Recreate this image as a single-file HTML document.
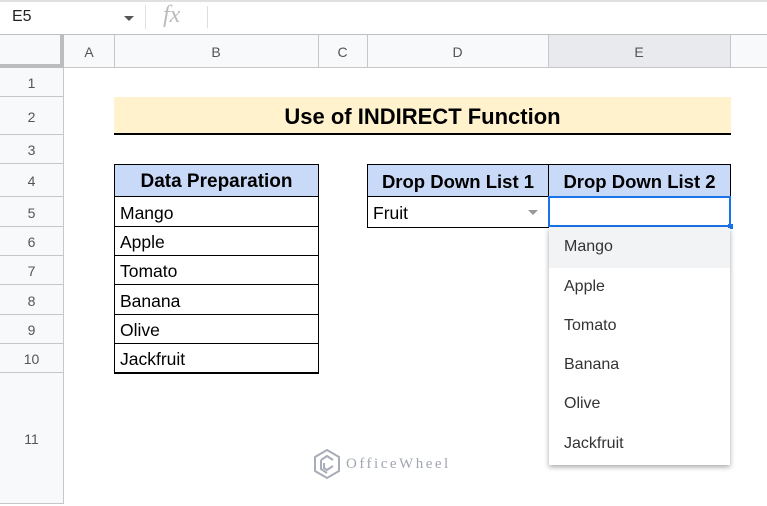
<!DOCTYPE html>
<html><head><style>
body{margin:0;width:767px;height:504px;overflow:hidden;background:#fff;font-family:"Liberation Sans",Arial,sans-serif;position:relative}
.a{position:absolute;box-sizing:border-box}
.hdr{background:#f8f9fa;color:#555;font-size:14px;text-align:center}
.vl{position:absolute;width:1px;background:#e2e3e3}
.cell{position:absolute;box-sizing:border-box;font-size:17.5px;color:#000;padding-left:5px;padding-top:3px;display:flex;align-items:center}
.dd{position:absolute;left:564px;font-size:16px;color:#333}
</style></head><body>
<div class="a" style="left:0;top:0;width:767px;height:2px;background:#e0e0e0"></div>
<div class="a" style="left:12px;top:8px;font-size:16px;color:#222">E5</div>
<div class="a" style="left:124px;top:16px;width:0;height:0;border-left:5px solid transparent;border-right:5px solid transparent;border-top:5px solid #555"></div>
<div class="a" style="left:145px;top:5px;width:1px;height:24px;background:#e0e0e0"></div>
<div class="a" style="left:163px;top:2px;font-size:24px;color:#bbb;font-family:'Liberation Serif',serif;font-style:italic">fx</div>
<div class="a" style="left:207px;top:6px;width:1px;height:22px;background:#ddd"></div>
<div class="a" style="left:0;top:34px;width:767px;height:1px;background:#c0c0c0"></div>
<div class="a hdr" style="left:0;top:35px;width:767px;height:33px"></div>
<div class="a" style="left:0;top:35px;width:64px;height:33px;border-right:4px solid #bdbdbd;border-bottom:4px solid #bdbdbd;background:#f8f9fa"></div>
<div class="a hdr" style="left:64px;top:44px;width:50px">A</div>
<div class="a hdr" style="left:114px;top:44px;width:204px">B</div>
<div class="a hdr" style="left:318px;top:44px;width:49px">C</div>
<div class="a hdr" style="left:367px;top:44px;width:181px">D</div>
<div class="a" style="left:548px;top:35px;width:182px;height:33px;background:#e8eaed"></div>
<div class="a hdr" style="left:548px;top:44px;width:182px;background:none">E</div>
<div class="vl" style="left:114px;top:35px;height:33px;background:#c7c7c7"></div>
<div class="vl" style="left:318px;top:35px;height:33px;background:#c7c7c7"></div>
<div class="vl" style="left:367px;top:35px;height:33px;background:#c7c7c7"></div>
<div class="vl" style="left:548px;top:35px;height:33px;background:#c7c7c7"></div>
<div class="vl" style="left:730px;top:35px;height:33px;background:#c7c7c7"></div>
<div class="a" style="left:64px;top:67px;width:703px;height:1px;background:#c7c7c7"></div>
<div class="a" style="left:0;top:68px;width:64px;height:436px;background:#f8f9fa;border-right:1px solid #c7c7c7"></div>
<div class="a" style="left:0;top:197px;width:63px;height:30px;background:#e8eaed"></div>
<div id="rows"></div>
<div class="a" style="left:114px;top:97px;width:617px;height:38px;background:#fff2cc;border-bottom:2px solid #000;font-weight:bold;font-size:22px;text-align:center;line-height:40px">Use of INDIRECT Function</div>
<div class="a" style="left:114px;top:164px;width:205px;height:210px;border:1px solid #000"></div>
<div class="cell" style="left:114px;top:164px;width:205px;height:33px;background:#c9daf8;border:1px solid #000;justify-content:center;font-weight:bold;font-size:19px;padding:3px 0 0">Data Preparation</div>
<div class="cell" style="left:367px;top:164px;width:182px;height:33px;background:#c9daf8;border:1px solid #000;justify-content:center;font-weight:bold;font-size:18.5px;padding:3px 0 0;white-space:nowrap">Drop Down List 1</div>
<div class="cell" style="left:548px;top:164px;width:183px;height:33px;background:#c9daf8;border:1px solid #000;justify-content:center;font-weight:bold;font-size:18.5px;padding:3px 0 0;white-space:nowrap">Drop Down List 2</div>
<div class="cell" style="left:367px;top:196px;width:182px;height:32px;border:1px solid #000;border-top:none">Fruit</div>
<div class="a" style="left:528px;top:210px;width:0;height:0;border-left:5px solid transparent;border-right:5px solid transparent;border-top:5px solid #999"></div>
<div class="a" style="left:548px;top:196px;width:183px;height:31px;border:2px solid #1a73e8;background:#fff"></div>
<div class="a" style="left:728px;top:224px;width:5px;height:5px;background:#1a73e8"></div>
<div class="a" style="left:549px;top:228px;width:181px;height:237px;background:#fff;box-shadow:0 2px 5px rgba(0,0,0,.35)"></div>
<div class="a" style="left:549px;top:228px;width:181px;height:40px;background:#f1f3f4"></div>
<div class="dd" style="top:238px">Mango</div>
<div class="dd" style="top:278px">Apple</div>
<div class="dd" style="top:317px">Tomato</div>
<div class="dd" style="top:356px">Banana</div>
<div class="dd" style="top:395px">Olive</div>
<div class="dd" style="top:435px">Jackfruit</div>
<svg class="a" style="left:312px;top:448px" width="30" height="32" viewBox="0 0 30 32"><path d="M15 2 L27 9 L27 23 L15 30 L3 23 L3 9 Z" fill="none" stroke="#a8adb8" stroke-width="2"/><path d="M9 12 L15 8 L21 12 M9 12 V21 L15 25 M12 15 V20 L15 22 L21 18" fill="none" stroke="#a8adb8" stroke-width="2"/></svg>
<div class="a" style="left:346px;top:456px;font-family:'Liberation Serif',serif;font-size:15px;letter-spacing:2.5px;color:#a0a5b0">OfficeWheel</div>
<script>
var ys=[68,97,135,164,197,227,256,285,315,344,373,504],h='';
for(var i=0;i<11;i++){var t=ys[i],b=ys[i+1];
h+='<div class="a hdr" style="left:0;top:'+t+'px;width:63px;height:'+(b-t)+'px;line-height:'+(b-t+2)+'px;border-bottom:1px solid #c7c7c7">'+(i+1)+'</div>';}
var items=['Mango','Apple','Tomato','Banana','Olive','Jackfruit'];
for(var j=0;j<6;j++){h+='<div class="cell" style="left:114px;top:'+(ys[j+4]-1)+'px;width:205px;height:'+(ys[j+5]-ys[j+4]+1)+'px;border:1px solid #000">'+items[j]+'</div>';}
document.getElementById('rows').innerHTML=h;
</script>
</body></html>
